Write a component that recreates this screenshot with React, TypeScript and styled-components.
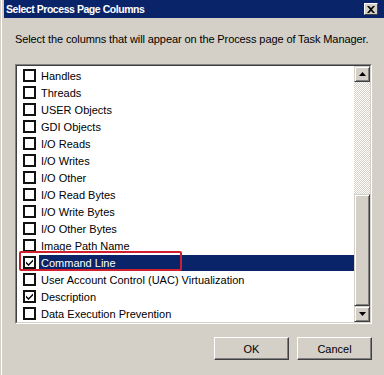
import React from "react";
import styled, { createGlobalStyle } from "styled-components";

const Global = createGlobalStyle`
  html, body { margin: 0; padding: 0; background: #d4d0c8; }
  body { width: 384px; height: 375px; overflow: hidden; }
`;

const Frame = styled.div`
  width: 384px;
  height: 375px;
  box-sizing: border-box;
  background: #d4d0c8;
  border-left: 1px solid #d4d0c8;
  box-shadow: inset 1px 0 0 #ffffff;
  padding-left: 3px;
  font-family: "Liberation Sans", Tahoma, sans-serif;
  font-size: 11px;
  color: #000;
  display: flex;
  flex-direction: column;
`;

const TitleBar = styled.div`
  height: 18px;
  background: #0a246a;
  display: flex;
  align-items: center;
  justify-content: space-between;
  padding: 0 6px 0 2px;
`;

const Title = styled.span`
  color: #fff;
  font-weight: bold;
  font-size: 10.5px;
  letter-spacing: -0.45px;
`;

const CloseBtn = styled.div`
  width: 14px;
  height: 12px;
  box-sizing: border-box;
  background: #d4d0c8;
  border-top: 1px solid #fff;
  border-left: 1px solid #fff;
  border-right: 1px solid #404040;
  border-bottom: 1px solid #404040;
  display: flex;
  align-items: center;
  justify-content: center;
`;

const Body = styled.div`
  flex: 1;
  display: flex;
  flex-direction: column;
  padding: 13px 12px 0 11px;
`;

const Prompt = styled.div`
  height: 16px;
  line-height: 16px;
  white-space: nowrap;
  letter-spacing: -0.1px;
`;

const ListBox = styled.div`
  position: relative;
  margin-top: 17px;
  height: 260px;
  box-sizing: border-box;
  border-top: 1px solid #808080;
  border-left: 1px solid #808080;
  border-right: 1px solid #fff;
  border-bottom: 1px solid #fff;
  display: flex;
`;

const ListInner = styled.div`
  flex: 1;
  display: flex;
  border-top: 1px solid #404040;
  border-left: 1px solid #404040;
  border-right: 1px solid #d4d0c8;
  border-bottom: 1px solid #d4d0c8;
  background: #fff;
`;

const Items = styled.div`
  flex: 1;
  padding-top: 1px;
`;

const Row = styled.div`
  height: 17px;
  display: flex;
  align-items: center;
  padding-left: 6px;
`;

const Box = styled.div`
  width: 13px;
  height: 13px;
  box-sizing: border-box;
  border: 2px solid #111;
  background: #fff;
  display: flex;
  align-items: center;
  justify-content: center;
  flex-shrink: 0;
`;

const Label = styled.span<{ $selected?: boolean }>`
  margin-left: 3px;
  padding-left: 2px;
  flex: 1;
  height: 16px;
  line-height: 16px;
  white-space: nowrap;
  overflow: hidden;
  background: ${(p) => (p.$selected ? "#0a246a" : "transparent")};
  color: ${(p) => (p.$selected ? "#fff" : "#000")};
`;

const Highlight = styled.div`
  position: absolute;
  left: 3px;
  top: 186px;
  width: 163px;
  height: 20px;
  box-sizing: border-box;
  border: 2px solid #d0202e;
  border-radius: 2px;
  pointer-events: none;
`;

const ScrollBar = styled.div`
  width: 16px;
  display: flex;
  flex-direction: column;
`;

const ScrollBtn = styled.div`
  height: 16px;
  box-sizing: border-box;
  background: #d4d0c8;
  border-top: 1px solid #d4d0c8;
  border-left: 1px solid #d4d0c8;
  border-right: 1px solid #404040;
  border-bottom: 1px solid #404040;
  box-shadow: inset 1px 1px 0 #fff, inset -1px -1px 0 #808080;
  display: flex;
  align-items: center;
  justify-content: center;
`;

const Track = styled.div<{ $h: number }>`
  height: ${(p) => p.$h}px;
  background-color: #fff;
  background-image: conic-gradient(#d4d0c8 25%, #fff 0 50%, #d4d0c8 0 75%, #fff 0);
  background-size: 2px 2px;
`;

const Thumb = styled.div`
  flex: 1;
  box-sizing: border-box;
  background: #d4d0c8;
  border-top: 1px solid #d4d0c8;
  border-left: 1px solid #d4d0c8;
  border-right: 1px solid #404040;
  border-bottom: 1px solid #404040;
  box-shadow: inset 1px 1px 0 #fff, inset -1px -1px 0 #808080;
`;

const Buttons = styled.div`
  display: flex;
  justify-content: flex-end;
  gap: 8px;
  margin-top: 13px;
`;

const PushButton = styled.div`
  width: 75px;
  height: 23px;
  box-sizing: border-box;
  background: #d4d0c8;
  border-top: 1px solid #fff;
  border-left: 1px solid #fff;
  border-right: 1px solid #404040;
  border-bottom: 1px solid #404040;
  box-shadow: inset -1px -1px 0 #808080;
  display: flex;
  align-items: center;
  justify-content: center;
`;

const Check = () => (
  <svg width="9" height="9" viewBox="0 0 9 9">
    <path d="M1 3.5 L3.5 6 L8 1.5 L8 3.5 L3.5 8 L1 5.5 Z" fill="#000" />
  </svg>
);

const items: { label: string; checked?: boolean; selected?: boolean }[] = [
  { label: "Handles" },
  { label: "Threads" },
  { label: "USER Objects" },
  { label: "GDI Objects" },
  { label: "I/O Reads" },
  { label: "I/O Writes" },
  { label: "I/O Other" },
  { label: "I/O Read Bytes" },
  { label: "I/O Write Bytes" },
  { label: "I/O Other Bytes" },
  { label: "Image Path Name" },
  { label: "Command Line", checked: true, selected: true },
  { label: "User Account Control (UAC) Virtualization" },
  { label: "Description", checked: true },
  { label: "Data Execution Prevention" },
];

export default function App() {
  return (
    <>
      <Global />
      <Frame>
        <TitleBar>
          <Title>Select Process Page Columns</Title>
          <CloseBtn>
            <svg width="8" height="7" viewBox="0 0 8 7">
              <path d="M0 0h2l2 2 2-2h2L5 3.5 8 7H6L4 5 2 7H0l3-3.5z" fill="#000" />
            </svg>
          </CloseBtn>
        </TitleBar>
        <Body>
          <Prompt>Select the columns that will appear on the Process page of Task Manager.</Prompt>
          <ListBox>
            <ListInner>
              <Items>
                {items.map((it) => (
                  <Row key={it.label}>
                    <Box>{it.checked && <Check />}</Box>
                    <Label $selected={it.selected}>{it.label}</Label>
                  </Row>
                ))}
              </Items>
              <ScrollBar>
                <ScrollBtn>
                  <svg width="7" height="4" viewBox="0 0 7 4">
                    <path d="M3.5 0 L7 4 L0 4 Z" fill="#000" />
                  </svg>
                </ScrollBtn>
                <Track $h={112} />
                <Thumb />
                <ScrollBtn>
                  <svg width="7" height="4" viewBox="0 0 7 4">
                    <path d="M0 0 L7 0 L3.5 4 Z" fill="#000" />
                  </svg>
                </ScrollBtn>
              </ScrollBar>
            </ListInner>
            <Highlight />
          </ListBox>
          <Buttons>
            <PushButton>OK</PushButton>
            <PushButton>Cancel</PushButton>
          </Buttons>
        </Body>
      </Frame>
    </>
  );
}
